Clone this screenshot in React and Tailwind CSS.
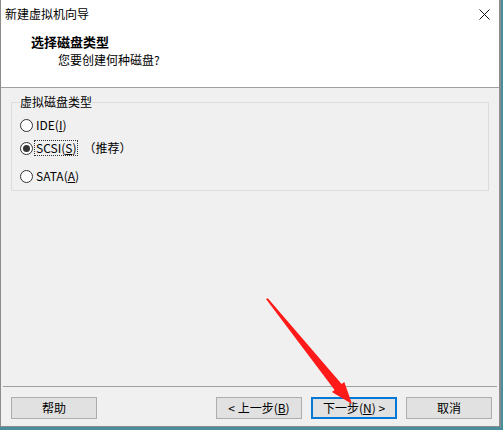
import React from 'react';

const font = { fontFamily: '"Noto Sans CJK SC", "Noto Sans", sans-serif' };

const Radio = ({ checked }) => (
  <span className="w-[13px] h-[13px] rounded-full border border-[#333333] bg-white flex items-center justify-center shrink-0">
    {checked && <span className="w-[7px] h-[7px] rounded-full bg-[#333333]" />}
  </span>
);

const Button = ({ children, primary = false }) => (
  <button
    className={
      primary
        ? 'w-[86px] h-[22px] border-2 border-[#0078d7] bg-[#e1e1e1] text-[12px] leading-none text-black flex items-center justify-center'
        : 'w-[86px] h-[22px] border border-[#adadad] bg-[#e1e1e1] text-[12px] leading-none text-black flex items-center justify-center'
    }
  >
    {children}
  </button>
);

export default function App() {
  return (
    <div className="relative w-[503px] h-[430px] bg-[#4a8e9e] overflow-hidden" style={font}>
      {/* window */}
      <div className="w-[501px] h-[427px] flex flex-col bg-[#f0f0f0] border-l border-r-2 border-b border-l-[#8c8c8c] border-r-[#8c8c8c] border-b-[#8c8c8c]">
        {/* title bar */}
        <div className="h-[28px] bg-white flex items-center pl-[4px] shrink-0">
          <span className="text-[12px] text-black">新建虚拟机向导</span>
          <span className="ml-auto mr-[9px] flex items-center">
            <svg width="11" height="11" viewBox="0 0 11 11">
              <path d="M0.5 0.5 L10.5 10.5 M10.5 0.5 L0.5 10.5" stroke="#111" strokeWidth="1" />
            </svg>
          </span>
        </div>

        {/* header */}
        <div className="h-[53px] bg-white border-b border-[#a0a0a0] pl-[30px] pt-[6px] shrink-0 box-content">
          <div className="text-[13px] font-bold leading-[16px] text-black">选择磁盘类型</div>
          <div className="text-[12px] leading-[16px] text-black ml-[27px] mt-[2px]">您要创建何种磁盘?</div>
        </div>

        {/* body */}
        <div className="flex-1 px-[10px] pt-[6px]">
          <fieldset className="border border-[#dcdcdc] h-[97px] pl-[8px] pr-[8px]">
            <legend className="text-[12px] leading-[16px] text-black">虚拟磁盘类型</legend>
            <div className="flex items-center gap-[2px] mt-[5px] h-[20px]">
              <Radio />
              <span className="text-[12px] leading-[16px] text-black px-[1px]">
                IDE(<span className="underline">I</span>)
              </span>
            </div>
            <div className="flex items-center gap-[2px] mt-[3px] h-[20px]">
              <Radio checked />
              <span className="text-[12px] leading-[14px] text-black px-[1px] outline outline-1 outline-dotted outline-[#333]">
                SCSI(<span className="underline">S</span>)
              </span>
              <span className="text-[12px] leading-[16px] text-black ml-[4px]">（推荐）</span>
            </div>
            <div className="flex items-center gap-[2px] mt-[8px] h-[20px]">
              <Radio />
              <span className="text-[12px] leading-[16px] text-black px-[1px]">
                SATA(<span className="underline">A</span>)
              </span>
            </div>
          </fieldset>
        </div>

        {/* footer */}
        <div className="h-[40px] border-t border-[#a0a0a0] mx-[2px] flex items-start pt-[10px] pl-[8px] pr-[5px] shrink-0">
          <Button>帮助</Button>
          <div className="ml-auto flex gap-[9px]">
            <Button>
              &lt; 上一步(<span className="underline">B</span>)
            </Button>
            <Button primary>
              下一步(<span className="underline">N</span>) &gt;
            </Button>
            <Button>取消</Button>
          </div>
        </div>
      </div>

      {/* red annotation arrow */}
      <svg className="absolute inset-0 pointer-events-none" width="503" height="430" viewBox="0 0 503 430">
        <polygon
          points="266,299 267.8,298.3 341.6,384.1 344.3,381.9 352,404 331.9,392.1 334.6,389.9"
          fill="#ff1a1a"
        />
      </svg>
    </div>
  );
}
